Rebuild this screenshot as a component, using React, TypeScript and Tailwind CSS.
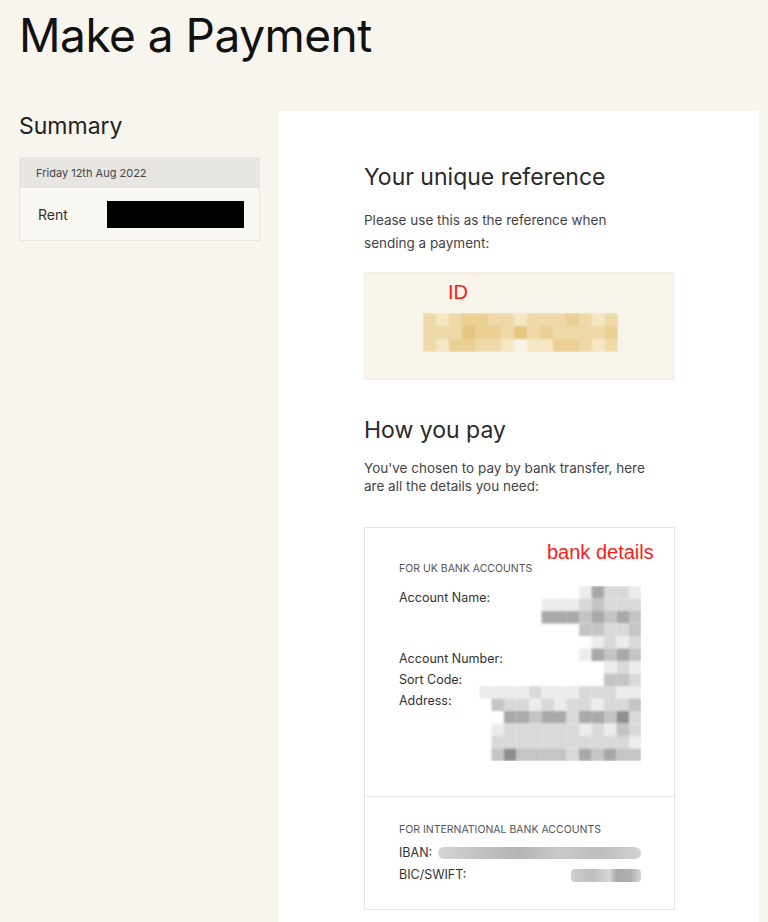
import React from 'react';

const font = { fontFamily: 'Inter, "Noto Sans", sans-serif' };

// pixelated redaction blob: rows of cell shades (0 = empty)
function Pixels({ rows, cell, colors }: { rows: number[][]; cell: number; colors: string[] }) {
  const w = Math.max(...rows.map((r) => r.length)) * cell;
  const h = rows.length * cell;
  return (
    <svg width={w} height={h} viewBox={`0 0 ${w} ${h}`} className="block shrink-0">
      <defs>
        <filter id="soft" x="-5%" y="-5%" width="110%" height="110%">
          <feGaussianBlur stdDeviation="0.8" />
        </filter>
      </defs>
      <g filter="url(#soft)">
        {rows.map((r, y) =>
          r.map((v, x) =>
            v ? <rect key={`${x}-${y}`} x={x * cell} y={y * cell} width={cell} height={cell} fill={colors[v - 1]} /> : null
          )
        )}
      </g>
    </svg>
  );
}

const gold = ['#f5e6c4', '#efd9a8', '#ebcf93', '#e6c57f'];
const grey = ['#ececec', '#d9d9d9', '#c4c4c4', '#a9a9a9', '#8f8f8f'];

export default function App() {
  return (
    <div className="min-h-[922px] w-[768px] bg-[#f8f5ee] text-[#222]" style={font}>
      <h1 className="pl-[19px] pt-[6px] text-[46px] leading-[58px] tracking-[-0.5px] text-[#111]">Make a Payment</h1>

      <div className="mt-[46px] flex items-start gap-[18px] pl-[19px] pr-[10px]">
        <aside className="w-[241px] shrink-0">
          <h2 className="mt-[1px] text-[23px] leading-[30px] text-[#222]">Summary</h2>
          <div className="mt-[16px] border border-[#ebe8e0] bg-[#faf8f2]">
            <div className="flex h-[30px] items-center bg-[#e7e6e3] pl-[16px] text-[11px] text-[#444]">Friday 12th Aug 2022</div>
            <div className="flex h-[52px] items-center pl-[18px]">
              <span className="w-[69px] text-[14px] text-[#333]">Rent</span>
              <span className="h-[27px] w-[137px] bg-black" />
            </div>
          </div>
        </aside>

        <main className="mt-[1px] min-h-[812px] flex-1 bg-white pl-[86px] pr-[84px] pt-[51px]">
          <h2 className="text-[23px] leading-[30px] text-[#2a2a2a]">Your unique reference</h2>
          <p className="mt-[17px] text-[13.5px] leading-[23px] text-[#444]">
            Please use this as the reference when
            <br />
            sending a payment:
          </p>
          <div className="relative mt-[17px] flex h-[108px] w-[310px] flex-col items-center justify-center border border-[#f4eee0] bg-[#f9f4e9]">
            <span className="absolute left-[83px] top-[9px] text-[20px] leading-[20px] text-[#ff1a1a]" style={{ fontFamily: '"Liberation Sans", sans-serif' }}>ID</span>
            <div className="ml-[2px] mt-[12px]">
              <Pixels
                cell={13}
                colors={gold}
                rows={[
                  [2, 1, 2, 3, 3, 2, 2, 1, 2, 2, 2, 3, 2, 1, 2],
                  [2, 2, 2, 4, 3, 3, 2, 4, 2, 3, 2, 2, 2, 2, 3],
                  [2, 1, 3, 3, 2, 2, 1, 0, 1, 1, 3, 3, 2, 1, 2],
                ]}
              />
            </div>
          </div>

          <h2 className="mt-[35px] text-[23px] leading-[30px] text-[#2a2a2a]">How you pay</h2>
          <p className="mt-[14px] text-[13.5px] leading-[18px] text-[#444]">
            You've chosen to pay by bank transfer, here
            <br />
            are all the details you need:
          </p>

          <div className="mt-[32px] w-[311px] border border-[#e6e6e6]">
            <div className="relative pb-[35px] pl-[34px] pr-[33px] pt-[34px]">
              <span className="absolute left-[182px] top-[12px] text-[20px] leading-[24px] text-[#ff1a1a]" style={{ fontFamily: '"Liberation Sans", sans-serif' }}>bank details</span>
              <div className="text-[10.5px] uppercase leading-[14px] text-[#555]">For UK bank accounts</div>
              <div className="mt-[11px] flex justify-between">
                <div className="shrink-0 whitespace-nowrap text-[12.5px] leading-[21px] text-[#333]">
                  <div>Account Name:</div>
                  <div className="h-[40px]" />
                  <div>Account Number:</div>
                  <div>Sort Code:</div>
                  <div>Address:</div>
                </div>
                <div className="ml-[-80px] mt-[-1px]">
                  <Pixels
                    cell={12.5}
                    colors={grey}
                    rows={[
                      [0, 0, 0, 0, 0, 0, 0, 0, 1, 4, 2, 2, 1],
                      [0, 0, 0, 0, 0, 1, 1, 1, 2, 3, 2, 2, 2],
                      [0, 0, 0, 0, 0, 4, 4, 4, 3, 4, 3, 4, 3],
                      [0, 0, 0, 0, 0, 0, 0, 0, 3, 3, 2, 2, 3],
                      [0, 0, 0, 0, 0, 0, 0, 0, 0, 1, 2, 1, 2],
                      [0, 0, 0, 0, 0, 0, 0, 0, 1, 4, 3, 4, 3],
                      [0, 0, 0, 0, 0, 0, 0, 0, 0, 0, 1, 2, 1],
                      [0, 0, 0, 0, 0, 0, 0, 0, 0, 0, 3, 3, 2],
                      [1, 1, 1, 1, 2, 1, 1, 1, 2, 2, 2, 1, 1],
                      [0, 3, 2, 2, 1, 2, 1, 2, 2, 1, 2, 2, 3],
                      [0, 0, 4, 4, 3, 4, 4, 2, 4, 4, 3, 5, 2],
                      [0, 1, 2, 2, 2, 2, 2, 2, 1, 2, 1, 3, 2],
                      [0, 2, 2, 2, 2, 2, 2, 2, 2, 2, 2, 2, 1],
                      [0, 3, 5, 3, 3, 3, 3, 2, 4, 3, 4, 3, 3],
                    ]}
                  />
                </div>
              </div>
            </div>
            <div className="border-t border-[#e6e6e6] pb-[23px] pl-[34px] pr-[33px] pt-[26px]">
              <div className="text-[10.5px] uppercase leading-[14px] text-[#555]">For international bank accounts</div>
              <div className="mt-[5px] flex items-center text-[12.5px] leading-[22px] text-[#333]">
                <span>IBAN:</span>
                <span className="ml-[6px] h-[12px] flex-1 rounded-full bg-[linear-gradient(90deg,#d6d6d6,#c2c2c2_20%,#b5b5b5_40%,#c9c9c9_60%,#bdbdbd_80%,#d2d2d2)]" />
              </div>
              <div className="flex items-center text-[12.5px] leading-[22px] text-[#333]">
                <span>BIC/SWIFT:</span>
                <span className="ml-auto h-[13px] w-[70px] rounded-sm bg-[linear-gradient(90deg,#cfcfcf,#bdbdbd_30%,#d8d8d8_55%,#a9a9a9_65%,#b0b0b0_85%,#d3d3d3)]" />
              </div>
            </div>
          </div>
        </main>
      </div>
    </div>
  );
}
